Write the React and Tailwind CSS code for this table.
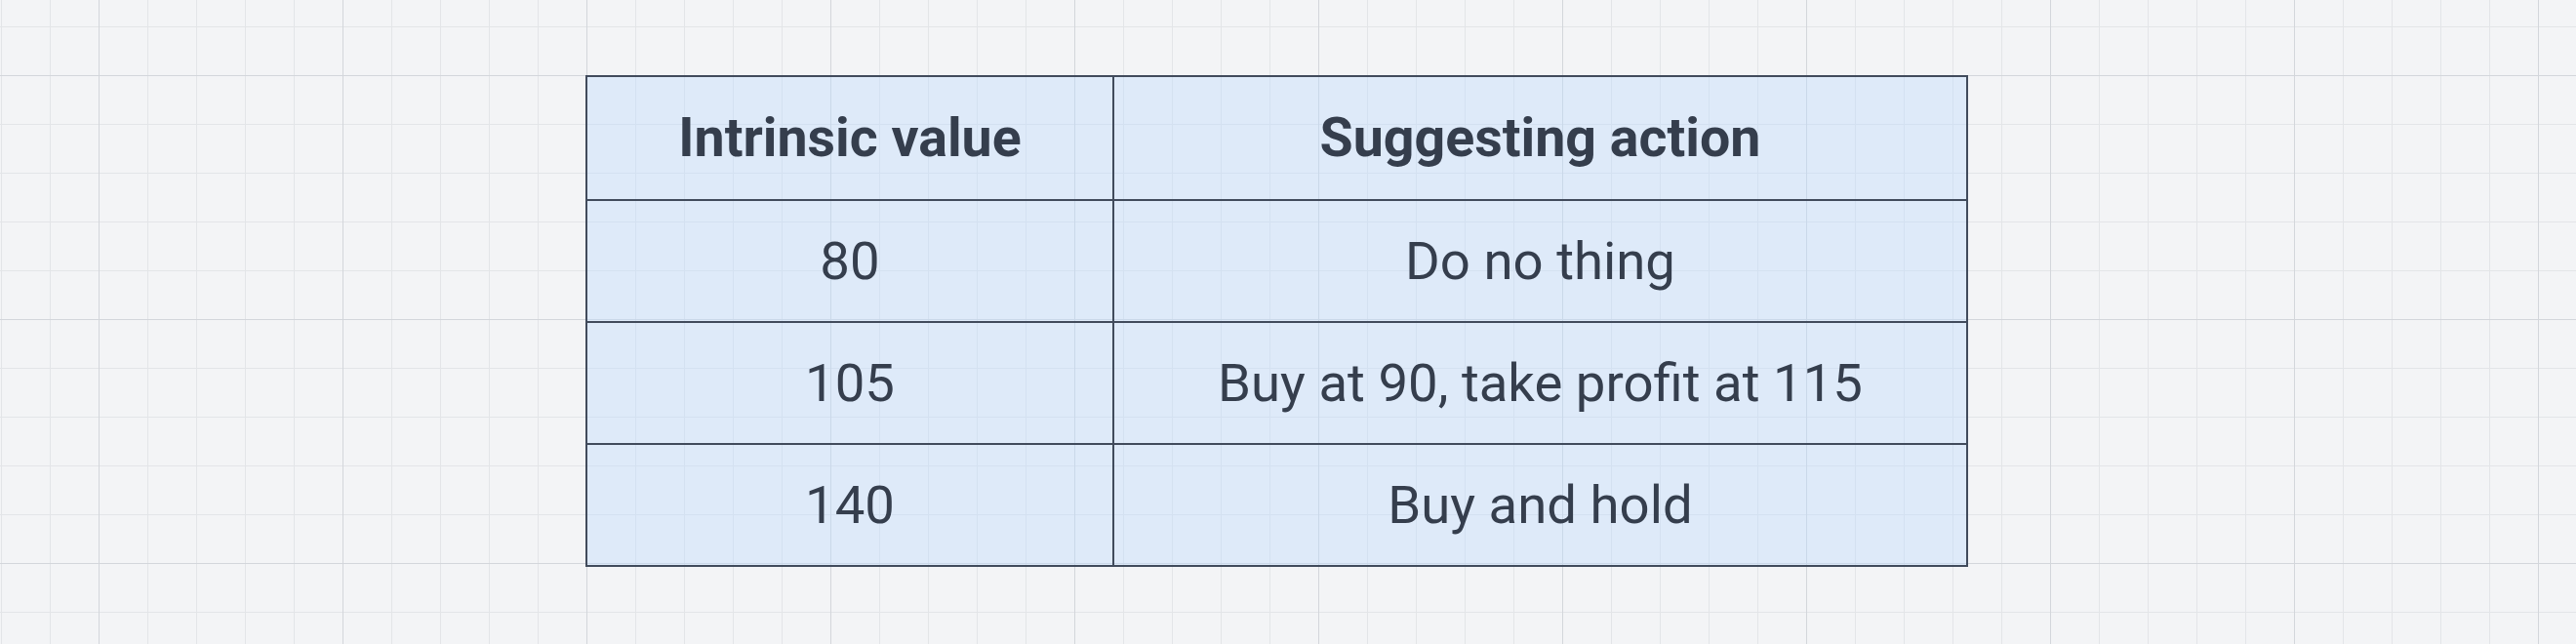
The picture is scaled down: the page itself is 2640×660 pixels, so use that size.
import React from 'react';

const rows = [
  { value: '80', action: 'Do no thing' },
  { value: '105', action: 'Buy at 90, take profit at 115' },
  { value: '140', action: 'Buy and hold' },
];

const App = () => {
  return (
    <div
      className="w-[2640px] h-[660px] bg-[#f3f4f6] pl-[600px] pt-[77px] font-['Roboto',sans-serif] text-[#353e4d] bg-[image:linear-gradient(to_right,#d3d6db_1px,transparent_1px),linear-gradient(to_bottom,#d3d6db_1px,transparent_1px),linear-gradient(to_right,#e3e5e8_1px,transparent_1px),linear-gradient(to_bottom,#e3e5e8_1px,transparent_1px)] bg-[size:250px_250px,250px_250px,50px_50px,50px_50px] bg-[position:101px_77px,101px_77px,1px_27px,1px_27px]"
    >
      {/* Table */}
      <div className="w-[1417px] border-2 border-[#414b5c] grid grid-cols-[540px_873px] bg-[#bfdbfe]/40">
        <div className="h-[125px] border-r-2 border-[#414b5c] flex items-center justify-center text-[55.5px] font-bold">
          Intrinsic value
        </div>
        <div className="h-[125px] flex items-center justify-center text-[55.5px] font-bold">
          Suggesting action
        </div>

        {rows.map((row) => (
          <React.Fragment key={row.value}>
            <div className="h-[125px] border-t-2 border-r-2 border-[#414b5c] flex items-center justify-center text-[54.5px]">
              {row.value}
            </div>
            <div className="h-[125px] border-t-2 border-[#414b5c] flex items-center justify-center text-[54.5px]">
              {row.action}
            </div>
          </React.Fragment>
        ))}
      </div>
    </div>
  );
};

export default App;
